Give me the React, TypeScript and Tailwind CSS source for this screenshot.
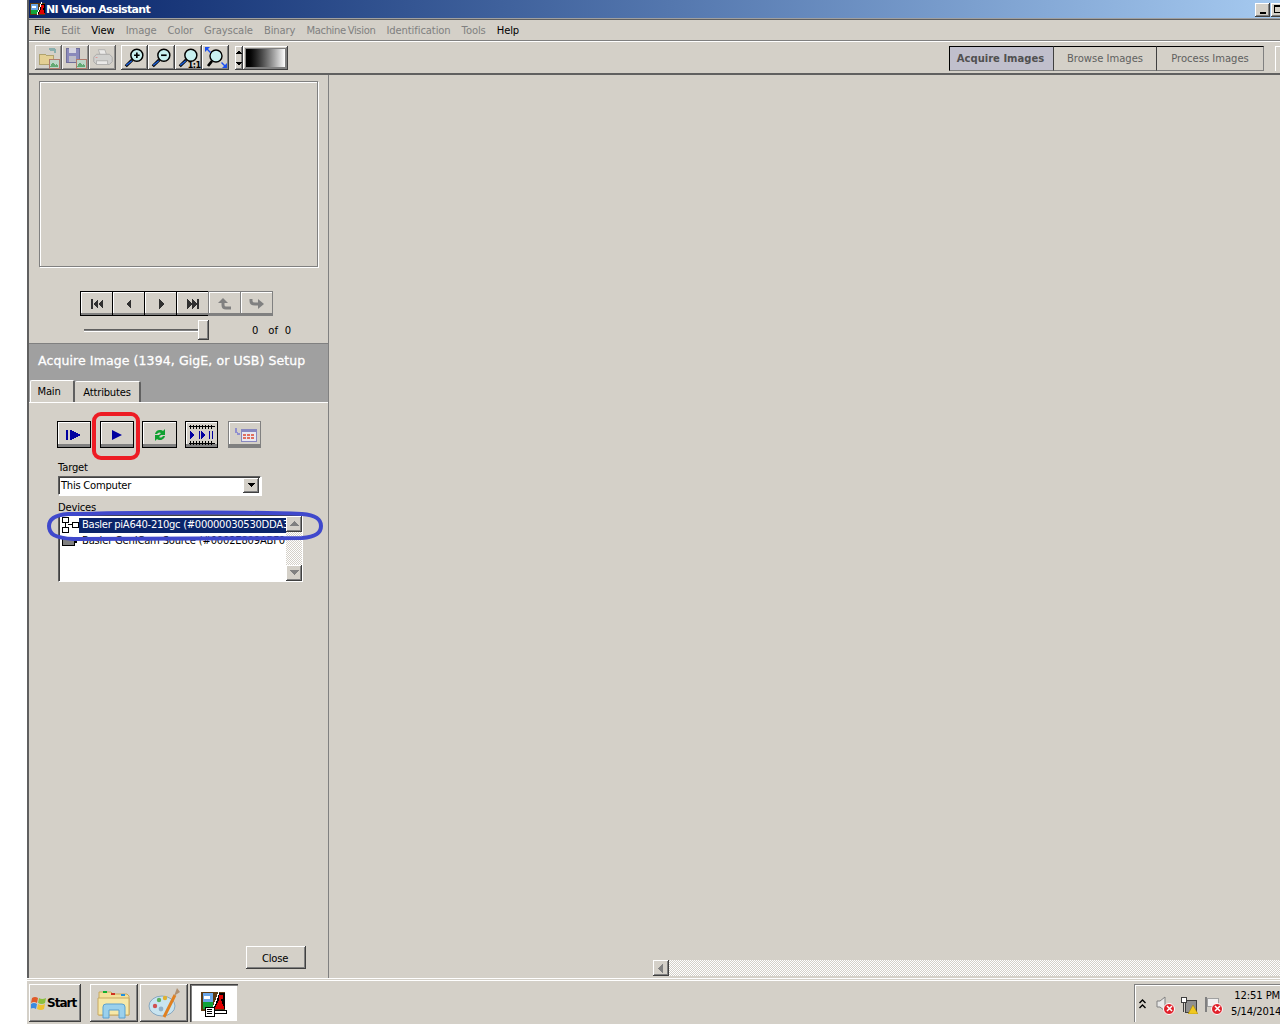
import React from "react";

const raised = "bg-[#d4d0c8] shadow-[inset_-1px_-1px_0_#404040,inset_1px_1px_0_#ffffff,inset_-2px_-2px_0_#808080]";
const checker = "bg-[repeating-conic-gradient(#ffffff_0_25%,#d4d0c8_0_50%)] bg-[length:2px_2px]";

function AppLogo({ size = 18 }: { size?: number }) {
  return (
    <svg width={size} height={size} viewBox="0 0 18 18" shapeRendering="crispEdges">
      <rect x="1" y="2" width="16" height="13" fill="#5b3a12" />
      <rect x="2" y="3" width="7" height="11" fill="#6aa6e8" />
      <rect x="2" y="9" width="7" height="5" fill="#12a33a" />
      <rect x="3" y="5" width="4" height="2" fill="#ffffff" />
      <polygon points="9,14 17,14 17,3 13,3" fill="#000000" />
      <polygon points="10,14 17,14 14,6" fill="#e00000" />
      <rect x="13" y="4" width="3" height="3" fill="#e00000" />
      <polygon points="8,15 9,15 14,1 13,1" fill="#ffffff" />
    </svg>
  );
}

function Magnifier({ children }: { children?: React.ReactNode }) {
  return (
    <svg width="24" height="24" viewBox="0 0 26 26">
      <circle cx="15" cy="10" r="6.5" fill="#c8f0f0" stroke="#000000" strokeWidth="1.6" />
      <path d="M10 15 L3 22" stroke="#000000" strokeWidth="3.2" />
      <path d="M9.5 16 L3.5 21" stroke="#1c5fd8" strokeWidth="1.5" />
      {children}
    </svg>
  );
}

function OpenIcon() {
  return (
    <svg width="26" height="26" viewBox="0 0 26 26" shapeRendering="crispEdges">
      <path d="M3 9 h6 l1 1 h7 v9 h-14 z" fill="#e8d088" stroke="#a89858" />
      <path d="M13 3 h5 l2 2 v3 h-2 v-2 h-4 z" fill="#78a8a8" />
      <rect x="13" y="14" width="10" height="9" fill="#b8d8c8" stroke="#a86858" />
      <path d="M14 22 l3 -5 l2 3 l2 -2 l1 4 z" fill="#48a060" />
    </svg>
  );
}
function SaveIcon() {
  return (
    <svg width="26" height="26" viewBox="0 0 26 26" shapeRendering="crispEdges">
      <rect x="3" y="3" width="13" height="14" fill="#7878b8" stroke="#585890" />
      <rect x="6" y="3" width="7" height="5" fill="#d8d8e8" />
      <rect x="6" y="11" width="7" height="6" fill="#b8b8c8" />
      <rect x="13" y="14" width="10" height="9" fill="#b8d8c8" stroke="#a86858" />
      <path d="M14 22 l3 -5 l2 3 l2 -2 l1 4 z" fill="#48a060" />
    </svg>
  );
}
function PrintIcon() {
  return (
    <svg width="24" height="24" viewBox="0 0 26 26">
      <path d="M8 4 h7 l2 6 h-7 z" fill="#f0f0f0" stroke="#a8a8a8" />
      <path d="M3 12 l3 -3 h14 l3 3 v5 l-3 3 h-14 l-3 -3 z" fill="#d0d0d0" stroke="#a0a0a0" />
      <rect x="6" y="16" width="12" height="4" fill="#f0f0f0" stroke="#a8a8a8" />
      <rect x="5" y="12" width="2" height="1" fill="#e08080" />
    </svg>
  );
}

function ToolBtn({ children, w = "w-[27px]" }: { children: React.ReactNode; w?: string }) {
  return <div className={`${w} h-[25px] overflow-hidden flex items-center justify-center ${raised}`}>{children}</div>;
}

function NavBtn({ children, disabled }: { children: React.ReactNode; disabled?: boolean }) {
  return (
    <div className={`w-[33px] h-[25px] flex items-center justify-center border ${disabled ? "border-[#808080]" : "border-black"} -mr-px shadow-[inset_0_-2px_0_#808080,inset_1px_1px_0_#ffffff]`}>
      {children}
    </div>
  );
}

function Glyph({ d }: { d: string }) {
  return (
    <svg width="14" height="12" viewBox="0 0 14 12" shapeRendering="crispEdges">
      <path d={d} fill="#303030" />
    </svg>
  );
}

function ActionBtn({ children, w, disabled }: { children: React.ReactNode; w: string; disabled?: boolean }) {
  return (
    <div className={`${w} h-[27px] flex items-center justify-center border ${disabled ? "border-[#808080]" : "border-black"} shadow-[inset_0_-3px_0_#808080,inset_1px_1px_0_#ffffff]`}>
      {children}
    </div>
  );
}

function ScrollArrow({ up }: { up?: boolean }) {
  return (
    <div className={`w-[16px] h-[16px] flex items-center justify-center ${raised}`}>
      <svg width="10" height="6" viewBox="0 0 10 6" shapeRendering="crispEdges">
        <polygon points={up ? "5,0 10,5 0,5" : "0,0 10,0 5,5"} fill="#808080" />
      </svg>
    </div>
  );
}

function XBadge() {
  return (
    <span className="absolute -right-[3px] -bottom-[3px] w-[12px] h-[12px] rounded-full bg-[#e0202a] border border-white flex items-center justify-center">
      <svg width="7" height="7" viewBox="0 0 7 7"><path d="M1 1 L6 6 M6 1 L1 6" stroke="#ffffff" strokeWidth="1.5" /></svg>
    </span>
  );
}

export default function App() {
  return (
    <div className="relative w-[1280px] h-[1024px] overflow-hidden bg-white flex text-[11px] leading-none text-black font-['Liberation_Sans',sans-serif]">
      <div className="w-[27px] shrink-0 bg-white" />
      <div className="w-[1253px] shrink-0 flex flex-col bg-[#d4d0c8]">
        <div className="flex-1 flex flex-col border-l-2 border-[#606060] min-h-0">
          {/* Title bar */}
          <div className="h-[18px] shrink-0 flex items-center bg-gradient-to-r from-[#0a246a] to-[#a6caf0]">
            <AppLogo size={17} />
            <span className="text-[11px] font-bold text-white font-['DejaVu_Sans',sans-serif] tracking-[-0.65px]">NI Vision Assistant</span>
            <div className="ml-auto flex gap-px mt-[1px] -mr-[6px]">
              <div className={`w-[15px] h-[14px] flex items-end justify-center pb-[3px] ${raised}`}>
                <div className="w-[6px] h-[2px] bg-black" />
              </div>
              <div className={`w-[15px] h-[14px] ${raised} pl-[3px] pt-[2px]`}>
                <div className="w-[9px] h-[8px] border border-black border-t-2" />
              </div>
            </div>
          </div>
          <div className="h-[2px] shrink-0 border-b border-[#606060] bg-[#a0a0a0]" />
          {/* Menu */}
          <div className="h-[20px] shrink-0 flex items-center pl-[5px] pt-[2px] gap-[11px] font-['DejaVu_Sans',sans-serif] text-[10px] tracking-[-0.1px]">
            <span>File</span>
            <span className="text-[#808080]">Edit</span>
            <span>View</span>
            <span className="text-[#808080]">Image</span>
            <span className="text-[#808080]">Color</span>
            <span className="text-[#808080]">Grayscale</span>
            <span className="text-[#808080]">Binary</span>
            <span className="text-[#808080] tracking-[-0.35px] [word-spacing:-1px]">Machine Vision</span>
            <span className="text-[#808080]">Identification</span>
            <span className="text-[#808080]">Tools</span>
            <span>Help</span>
          </div>
          <div className="h-[2px] shrink-0 border-t border-[#808080] bg-white border-b-0" />
          {/* Toolbar */}
          <div className="h-[33px] shrink-0 flex items-start border-b-2 border-[#606060] pt-[3px] pl-[6px]">
            <div className="flex gap-0 opacity-80">
              <ToolBtn><OpenIcon /></ToolBtn>
              <ToolBtn><SaveIcon /></ToolBtn>
              <ToolBtn><PrintIcon /></ToolBtn>
            </div>
            <div className="flex ml-[5px]">
              <ToolBtn>
                <Magnifier><path d="M12 10 h6 M15 7 v6" stroke="#000000" strokeWidth="1.8" /></Magnifier>
              </ToolBtn>
              <ToolBtn>
                <Magnifier><path d="M12 10 h6" stroke="#000000" strokeWidth="1.8" /></Magnifier>
              </ToolBtn>
              <ToolBtn>
                <div className="relative w-[24px] h-[24px]">
                  <Magnifier />
                  <span className="absolute right-0 bottom-0 text-[8px] font-bold leading-none font-['DejaVu_Sans',sans-serif] tracking-[-0.5px]">1:1</span>
                </div>
              </ToolBtn>
              <ToolBtn>
                <svg width="26" height="24" viewBox="0 0 26 24">
                  <circle cx="13" cy="10" r="6" fill="#c8f0f0" stroke="#000000" strokeWidth="1.4" />
                  <path d="M9 15 L5 20" stroke="#000000" strokeWidth="2.8" />
                  <path d="M2 1 h5 l-2 2 l3 3 l-1 1 l-3 -3 l-2 2 z" fill="#1c50f0" />
                  <path d="M24 22 h-5 l2 -2 l-3 -3 l1 -1 l3 3 l2 -2 z" fill="#1c50f0" />
                </svg>
              </ToolBtn>
            </div>
            <div className="flex ml-[6px] mt-[1px]">
              <div className={`w-[8px] h-[24px] flex flex-col items-center justify-around ${raised}`}>
                <svg width="6" height="4" viewBox="0 0 6 4" shapeRendering="crispEdges"><polygon points="3,0 6,4 0,4" fill="#000000" /></svg>
                <svg width="6" height="4" viewBox="0 0 6 4" shapeRendering="crispEdges"><polygon points="0,0 6,0 3,4" fill="#000000" /></svg>
              </div>
              <div className={`w-[45px] h-[24px] p-[2px] ${raised}`}>
                <div className="w-full h-full border border-[#808080] bg-gradient-to-r from-black to-white" />
              </div>
            </div>
            <div className="ml-auto flex mt-[1px] h-[25px] font-['DejaVu_Sans',sans-serif] text-[10px] text-[#606060]">
              <div className="w-[105px] flex items-center justify-center pr-[2px] bg-[#c0bfcc] border-t border-l border-black border-b border-b-[#808080] border-r border-r-[#404040] font-bold text-[#505050]">Acquire Images</div>
              <div className="w-[103px] flex items-center justify-center border-t border-black border-b border-b-[#808080] border-r border-r-[#404040]">Browse Images</div>
              <div className="w-[107px] flex items-center justify-center border-t border-black border-b border-b-[#808080] border-r border-r-[#808080]">Process Images</div>
              <div className="w-[5px] ml-[11px] border-l border-t border-white" />
            </div>
          </div>
          {/* Main */}
          <div className="flex-1 flex min-h-0">
            {/* Left panel */}
            <div className="w-[299px] shrink-0 flex flex-col border-r border-[#808080] box-content">
              <div className="h-[269px] shrink-0 flex flex-col border-b border-[#808080]">
                <div className="h-[186px] mt-[6px] ml-[10px] mr-[10px] border border-[#808080] shadow-[inset_1px_1px_0_#ffffff,1px_1px_0_#ffffff]" />
                <div className="mt-[24px] ml-[51px] flex">
                  <NavBtn><Glyph d="M1 1 h2 v10 h-2 z M8 1 v10 l-5 -5 z M13 1 v10 l-5 -5 z" /></NavBtn>
                  <NavBtn><Glyph d="M9 1 v10 l-5 -5 z" /></NavBtn>
                  <NavBtn><Glyph d="M5 1 v10 l5 -5 z" /></NavBtn>
                  <NavBtn><Glyph d="M1 1 v10 l5 -5 z M6 1 v10 l5 -5 z M11 1 h2 v10 h-2 z" /></NavBtn>
                  <NavBtn disabled>
                    <svg width="16" height="14" viewBox="0 0 16 14" fill="none">
                      <path d="M1 6 L6 1 L11 6 Z" fill="#808080" />
                      <path d="M6 6 V8 Q6 11 9 11 H14" stroke="#808080" strokeWidth="3" />
                    </svg>
                  </NavBtn>
                  <NavBtn disabled>
                    <svg width="16" height="14" viewBox="0 0 16 14" fill="none">
                      <path d="M2 2 V4 Q2 7 6 7 H10" stroke="#808080" strokeWidth="3" />
                      <path d="M9 2 L15 7 L9 12 Z" fill="#808080" />
                    </svg>
                  </NavBtn>
                </div>
                <div className="mt-[4px] flex items-center ml-[55px] h-[20px]">
                  <div className="w-[114px] h-[3px] border-t border-[#606060] border-b border-b-white bg-[#808080]" />
                  <div className={`w-[11px] h-[20px] ${raised}`} />
                  <span className="ml-[43px] pt-[2px] tracking-[0.1px] font-['DejaVu_Sans',sans-serif] text-[10px] whitespace-pre">0   of  0</span>
                </div>
              </div>
              <div className="h-[58px] shrink-0 bg-[#a0a0a0] flex flex-col">
                <div className="pl-[9px] pt-[11px] h-[36px] text-white font-['DejaVu_Sans',sans-serif] text-[12.5px] tracking-[0.1px] [-webkit-text-stroke:0.3px_#ffffff]">Acquire Image (1394, GigE, or USB) Setup</div>
                <div className="flex items-end h-[22px] pl-px font-['DejaVu_Sans',sans-serif] text-[10px] tracking-[-0.2px]">
                  <div className="w-[45px] h-[23px] bg-[#d4d0c8] border-t border-l border-white border-r-2 border-r-[#606060] rounded-t-[2px] flex items-center justify-center -mb-px pb-[1px] pr-[6px]">Main</div>
                  <div className="w-[66px] h-[21px] bg-[#d4d0c8] border-t border-white border-r-2 border-r-[#606060] rounded-t-[2px] flex items-center justify-center pt-[2px]">Attributes</div>
                </div>
              </div>
              <div className="flex-1 flex flex-col border-t border-white pl-[28px] pr-[26px] relative">
                <div className="flex mt-[18px]">
                  <ActionBtn w="w-[34px]">
                    <svg width="16" height="10" viewBox="0 0 16 10" shapeRendering="crispEdges"><path d="M0 0 h2 v10 h-2 z M4 0 h1 l10 5 l-10 5 h-1 z" fill="#0000a0" /></svg>
                  </ActionBtn>
                  <div className="ml-[9px]">
                    <ActionBtn w="w-[34px]">
                      <svg width="11" height="10" viewBox="0 0 11 10"><polygon points="0,0 10,5 0,10" fill="#0000a0" /></svg>
                    </ActionBtn>
                  </div>
                  <div className="ml-[8px]">
                    <ActionBtn w="w-[35px]">
                      <svg width="14" height="16" viewBox="0 0 14 16">
                        <path d="M2 7 a5 5 0 0 1 8 -3 l2 -2 v6 h-6 l2 -2 a3 3 0 0 0 -4 1 z" fill="#10a030" />
                        <path d="M12 9 a5 5 0 0 1 -8 3 l-2 2 v-6 h6 l-2 2 a3 3 0 0 0 4 -1 z" fill="#10a030" />
                      </svg>
                    </ActionBtn>
                  </div>
                  <div className="ml-[8px]">
                    <ActionBtn w="w-[33px]">
                      <svg width="26" height="20" viewBox="0 0 26 20" shapeRendering="crispEdges">
                        <path d="M0 1 h26 v1 h-26 z M0 18 h26 v1 h-26 z" fill="#000000" />
                        <path d="M1 0 h1 v4 h-1 z M4 0 h1 v4 h-1 z M7 0 h1 v4 h-1 z M10 0 h1 v4 h-1 z M13 0 h1 v4 h-1 z M16 0 h1 v4 h-1 z M19 0 h1 v4 h-1 z M22 0 h1 v4 h-1 z M1 16 h1 v4 h-1 z M4 16 h1 v4 h-1 z M7 16 h1 v4 h-1 z M10 16 h1 v4 h-1 z M13 16 h1 v4 h-1 z M16 16 h1 v4 h-1 z M19 16 h1 v4 h-1 z M22 16 h1 v4 h-1 z" fill="#000000" />
                        <path d="M1 6 l5 4 l-5 4 z M10 6 h1 v8 h-1 z M12 6 l5 4 l-5 4 z M20 6 h1 v8 h-1 z M23 6 h1 v8 h-1 z" fill="#0000a0" />
                      </svg>
                    </ActionBtn>
                  </div>
                  <div className="ml-[10px]">
                    <ActionBtn w="w-[33px]" disabled>
                      <svg width="26" height="18" viewBox="0 0 26 18" shapeRendering="crispEdges">
                        <rect x="9" y="3" width="15" height="12" fill="#e8e8f0" stroke="#8888c0" />
                        <rect x="9" y="3" width="15" height="3" fill="#8888c0" />
                        <path d="M11 8 h3 v2 h-3 z M15 8 h3 v2 h-3 z M19 8 h3 v2 h-3 z M11 11 h3 v2 h-3 z M15 11 h3 v2 h-3 z M19 11 h3 v2 h-3 z" fill="#e07060" />
                        <path d="M3 2 v5 h2 v2 h3 v-2 h-2 v-1 h-1 v-4 z" fill="#9090d0" />
                      </svg>
                    </ActionBtn>
                  </div>
                </div>
                <div className="mt-[15px] ml-[1px] font-['DejaVu_Sans',sans-serif] text-[10px] tracking-[-0.2px] h-[11px]">Target</div>
                <div className="mt-[2px] ml-[1px] w-[203px] h-[19px] bg-white border border-[#606060] border-r-white border-b-white shadow-[inset_1px_1px_0_#404040,1px_1px_0_#ffffff] flex items-center pl-[2px] font-['DejaVu_Sans',sans-serif] text-[10px] tracking-[-0.25px]">
                  This Computer
                  <div className={`ml-auto mr-px w-[16px] h-[15px] flex items-center justify-center ${raised}`}>
                    <svg width="8" height="5" viewBox="0 0 8 5" shapeRendering="crispEdges"><polygon points="0,0 8,0 4,4" fill="#000000" /></svg>
                  </div>
                </div>
                <div className="mt-[8px] ml-[1px] font-['DejaVu_Sans',sans-serif] text-[10px] tracking-[-0.2px] h-[11px]">Devices</div>
                <div className="ml-[1px] w-[245px] h-[68px] bg-white border border-[#606060] border-r-white border-b-white shadow-[inset_1px_1px_0_#404040] flex font-['DejaVu_Sans',sans-serif] text-[10px] tracking-[-0.3px] overflow-hidden">
                  <div className="flex-1 min-w-0 pt-[2px] pl-[2px] overflow-hidden">
                    <div className="flex items-center h-[16px]">
                      <svg className="shrink-0" width="18" height="16" viewBox="0 0 18 16" shapeRendering="crispEdges">
                        <rect x="1" y="0" width="6" height="5" fill="#ffffff" stroke="#000000" />
                        <rect x="1" y="10" width="6" height="5" fill="#ffffff" stroke="#000000" />
                        <rect x="11" y="5" width="6" height="5" fill="#ffffff" stroke="#000000" />
                        <path d="M4 5 v5 M7 7.5 h4" stroke="#000000" />
                      </svg>
                      <div className="flex-1 min-w-0 h-[15px] bg-[#0a246a] text-white flex items-center pl-[3px] whitespace-nowrap overflow-hidden">Basler piA640-210gc (#00000030530DDA3</div>
                    </div>
                    <div className="flex items-center h-[15px]">
                      <svg className="shrink-0" width="18" height="12" viewBox="0 0 18 12" shapeRendering="crispEdges">
                        <rect x="1" y="2" width="12" height="8" fill="#808080" stroke="#000000" />
                        <rect x="13" y="4" width="3" height="4" fill="#000000" />
                      </svg>
                      <div className="pl-[3px] whitespace-nowrap overflow-hidden tracking-[-0.2px]">Basler GenICam Source (#0002E809ABF0</div>
                    </div>
                  </div>
                  <div className={`w-[16px] shrink-0 flex flex-col justify-between mt-[1px] ${checker}`}>
                    <ScrollArrow up />
                    <ScrollArrow />
                  </div>
                </div>
                <div className="mt-auto mb-[9px] self-end -mr-[4px]">
                  <div className={`w-[60px] h-[23px] flex items-center justify-center pt-[2px] pr-[2px] font-['DejaVu_Sans',sans-serif] text-[10px] tracking-[-0.2px] ${raised}`}>Close</div>
                </div>
              </div>
            </div>
            {/* Canvas */}
            <div className="flex-1 flex flex-col justify-end">
              <div className="flex h-[17px] mb-[1px] ml-[324px]">
                <div className={`w-[16px] h-[16px] flex items-center justify-center ${raised}`}>
                  <svg width="6" height="9" viewBox="0 0 6 9" shapeRendering="crispEdges"><polygon points="5,0 5,9 0,4.5" fill="#808080" /></svg>
                </div>
                <div className={`flex-1 h-[16px] ${checker}`} />
              </div>
            </div>
          </div>
        </div>
        {/* Taskbar */}
        <div className="h-[46px] shrink-0 flex border-t-[3px] border-[#ffffff] relative bg-[#d4d0c8] pt-[3px]">
          <div className="absolute left-0 right-0 -top-[2px] h-px bg-[#d4d0c8]" />
          <div className={`ml-[2px] w-[52px] h-[38px] flex items-center pl-[2px] font-bold text-[12px] font-['DejaVu_Sans',sans-serif] tracking-[-1px] ${raised}`}>
            <svg className="shrink-0" width="16" height="16" viewBox="0 0 16 16">
              <path d="M1 3 q3 -2 6 0 l-1 5 q-3 -2 -6 0 z" fill="#e05a28" />
              <path d="M8 3 q3 2 7 0 l-1 5 q-3 2 -7 0 z" fill="#8cc040" />
              <path d="M0 9 q3 -2 6 0 l-1 5 q-3 -2 -6 0 z" fill="#3a8ae0" />
              <path d="M7 9 q3 2 7 0 l-1 5 q-3 2 -7 0 z" fill="#f0c030" />
            </svg>
            Start
          </div>
          <div className={`ml-[9px] w-[48px] h-[38px] flex items-center justify-center ${raised}`}>
            <svg width="34" height="32" viewBox="0 0 34 32">
              <path d="M2 5 h12 l2 2 h14 l2 2 v19 h-30 z" fill="#f2e09a" stroke="#c8a860" />
              <rect x="6" y="4" width="4" height="2" fill="#10b030" />
              <rect x="14" y="6" width="4" height="2" fill="#d03020" />
              <rect x="24" y="7" width="4" height="2" fill="#2090e0" />
              <path d="M1 11 h31 v17 h-31 z" fill="#f6e8a8" stroke="#c8a860" />
              <path d="M6 31 v-11 q0 -3 3 -3 h16 q3 0 3 3 v11 h-6 v-8 h-10 v8 z" fill="#9ad0ec" stroke="#5aa0d0" />
            </svg>
          </div>
          <div className={`ml-[2px] w-[48px] h-[38px] flex items-center justify-center ${raised}`}>
            <svg width="34" height="32" viewBox="0 0 34 32">
              <ellipse cx="15" cy="19" rx="13" ry="10" fill="#c8e4f0" stroke="#88a8c0" />
              <circle cx="8" cy="19" r="2.2" fill="#d05050" />
              <circle cx="12" cy="13" r="2.2" fill="#60b060" />
              <circle cx="18" cy="11" r="2.2" fill="#e0b030" />
              <circle cx="14" cy="22" r="2.4" fill="#90b0c8" />
              <path d="M17 30 L28 8" stroke="#e08020" strokeWidth="3" />
              <path d="M27 9 L30 1 L33 5 z" fill="#b09070" />
            </svg>
          </div>
          <div className="ml-[2px] w-[48px] h-[38px] flex items-center justify-center bg-white shadow-[inset_1px_1px_0_#404040,inset_2px_2px_0_#808080,inset_-1px_-1px_0_#d4d0c8]">
            <div className="relative w-[28px] h-[28px]">
              <AppLogo size={26} />
              <svg className="absolute left-[4px] bottom-0" width="24" height="10" viewBox="0 0 24 10" shapeRendering="crispEdges">
                <rect x="1" y="0" width="9" height="9" fill="#ffffff" stroke="#000000" />
                <path d="M3 2 h5 v1 h-5 z M3 4 h5 v1 h-5 z M3 6 h5 v1 h-5 z" fill="#000000" />
                <rect x="10" y="3" width="12" height="3" fill="#ffffff" stroke="#000000" />
              </svg>
            </div>
          </div>
          <div className="ml-auto w-[146px] h-[38px] shrink-0 flex items-center border-l border-t border-[#808080] shadow-[inset_1px_1px_0_#ffffff] pl-[4px] overflow-hidden">
            <svg className="shrink-0" width="7" height="10" viewBox="0 0 7 10" fill="none"><path d="M0.5 4 L3.5 1 L6.5 4 M0.5 9 L3.5 6 L6.5 9" stroke="#000000" strokeWidth="1.4" /></svg>
            <div className="relative shrink-0 ml-[10px] w-[16px] h-[16px]">
              <svg width="14" height="16" viewBox="0 0 14 16"><path d="M1 5 h3 l5 -4 v14 l-5 -4 h-3 z" fill="#e8e8e8" stroke="#808080" /></svg>
              <XBadge />
            </div>
            <div className="relative shrink-0 ml-[8px] w-[16px] h-[16px]">
              <svg width="17" height="17" viewBox="0 0 17 17" shapeRendering="crispEdges">
                <rect x="5" y="4" width="11" height="12" fill="#909090" stroke="#404040" />
                <rect x="1" y="1" width="5" height="5" fill="#ffffff" stroke="#404040" />
                <rect x="3" y="6" width="1" height="10" fill="#404040" />
              </svg>
              <svg className="absolute -right-[2px] -bottom-[2px]" width="10" height="9" viewBox="0 0 10 9"><polygon points="5,0 10,9 0,9" fill="#f0c820" stroke="#a08000" strokeWidth="0.5" /></svg>
            </div>
            <div className="relative shrink-0 ml-[8px] w-[16px] h-[16px]">
              <svg width="16" height="17" viewBox="0 0 16 17" shapeRendering="crispEdges">
                <rect x="1" y="1" width="2" height="15" fill="#808080" />
                <path d="M3 2 h11 v8 h-11 z" fill="#f0f0f0" stroke="#a0a0a0" />
              </svg>
              <XBadge />
            </div>
            <div className="ml-[11px] shrink-0 flex flex-col items-center gap-[6px] font-['DejaVu_Sans',sans-serif] text-[10px] tracking-[-0.1px] whitespace-nowrap">
              <span className="pl-[2px]">12:51 PM</span>
              <span>5/14/2014</span>
            </div>
          </div>
        </div>
      </div>

      {/* Annotations drawn over the shot */}
      <div className="absolute left-[92px] top-[412px] w-[48px] h-[48px] rounded-[9px] border-[4px] border-[#ed1c24] pointer-events-none" />
      <svg className="absolute left-[44px] top-[508px] pointer-events-none" width="282" height="36" viewBox="0 0 282 36" fill="none">
        <path d="M24 6 C 10 7 5 12 5 18 C 5 26 10 30 30 31 L 258 30 C 272 29 277 25 277 18 C 277 11 272 7 258 6 C 180 3 90 5 24 6 Z" stroke="#3f48cc" strokeWidth="4" />
      </svg>
    </div>
  );
}
